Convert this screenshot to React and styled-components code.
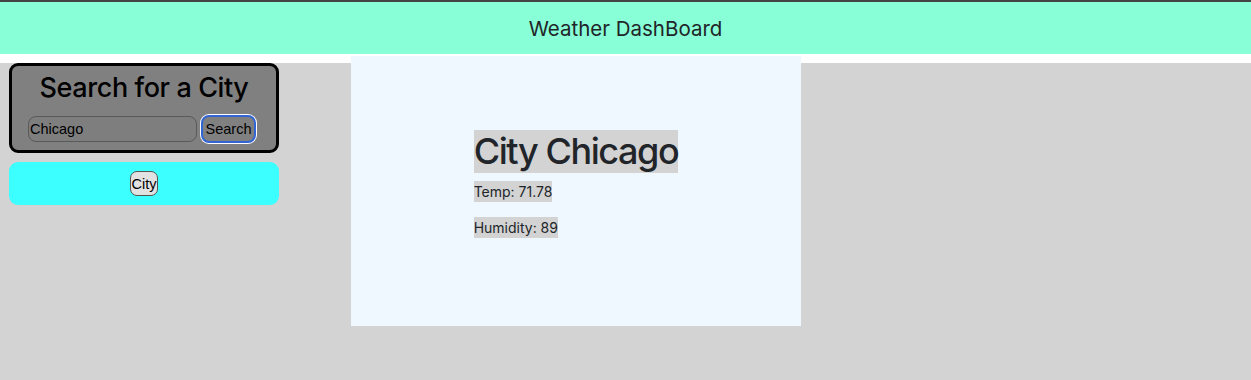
import React from 'react';
import styled, { createGlobalStyle } from 'styled-components';

const GlobalStyle = createGlobalStyle`
  html, body {
    margin: 0;
    padding: 0;
    background: #ffffff;
    font-family: Inter, "Noto Sans", sans-serif;
    color: #212529;
  }
`;

const Header = styled.header`
  display: flex;
  justify-content: center;
  align-items: center;
  height: 52px;
  border-top: 2px solid #444444;
  background-color: #88ffd6;
  font-size: 20.5px;
  color: #212529;
`;

const Main = styled.main`
  display: flex;
  align-items: flex-start;
  margin-top: 9px;
  min-height: calc(100vh - 63px);
  background-color: #d3d3d3;
`;

const Sidebar = styled.aside`
  display: flex;
  flex-direction: column;
  gap: 9px;
  width: 270px;
  padding: 0 72px 0 9px;
`;

const SearchBox = styled.section`
  display: flex;
  flex-direction: column;
  align-items: center;
  height: 90px;
  box-sizing: border-box;
  border: 3px solid #000000;
  border-radius: 9px;
  background-color: #808080;
`;

const SearchTitle = styled.h2`
  margin: 5px 0 0;
  font-size: 27px;
  font-weight: 500;
  letter-spacing: -0.4px;
  line-height: 34px;
  color: #000000;
`;

const SearchRow = styled.form`
  display: flex;
  align-items: center;
  gap: 4px;
  margin: 10px 4px 0 0;
`;

const CityInput = styled.input`
  width: 169px;
  height: 26px;
  box-sizing: border-box;
  padding: 0 1px;
  border: 1px solid #5a5a5a;
  border-radius: 8px;
  background-color: #7e7e7e;
  font-family: "Liberation Sans", Arial, sans-serif;
  font-size: 14.5px;
  color: #000000;
  outline: none;
`;

const SearchButton = styled.button`
  width: 55px;
  height: 28px;
  padding: 0;
  border: 2px solid #3165d4;
  border-radius: 8px;
  box-shadow: 0 0 0 1px #ffffff;
  background-color: #808080;
  font-family: "Liberation Sans", Arial, sans-serif;
  font-size: 14.5px;
  color: #000000;
`;

const HistoryBar = styled.div`
  display: flex;
  justify-content: center;
  align-items: center;
  height: 43px;
  border-radius: 9px;
  background-color: #3cffff;
`;

const HistoryButton = styled.button`
  height: 25px;
  padding: 0 1px;
  border: 1px solid #555555;
  border-radius: 7px;
  background-color: #e2e2e2;
  font-family: "Liberation Sans", Arial, sans-serif;
  font-size: 14.5px;
  color: #000000;
`;

const Card = styled.section`
  display: flex;
  justify-content: center;
  width: 450px;
  height: 270px;
  margin-top: -7px;
  box-sizing: border-box;
  padding-top: 74px;
  background-color: #f0f8ff;
`;

const Forecast = styled.div`
  display: flex;
  flex-direction: column;
  align-items: flex-start;
`;

const CityName = styled.h1`
  margin: 0 0 8px;
  font-size: 36px;
  font-weight: 500;
  letter-spacing: -1.4px;
  line-height: 43px;
  background-color: #d3d3d3;
`;

const Stat = styled.p`
  margin: 0 0 15px;
  font-size: 14px;
  line-height: 21px;
  background-color: #d3d3d3;
`;

export default function App() {
  return (
    <>
      <GlobalStyle />
      <Header>Weather DashBoard</Header>
      <Main>
        <Sidebar>
          <SearchBox>
            <SearchTitle>Search for a City</SearchTitle>
            <SearchRow onSubmit={(e) => e.preventDefault()}>
              <CityInput defaultValue="Chicago" />
              <SearchButton type="submit">Search</SearchButton>
            </SearchRow>
          </SearchBox>
          <HistoryBar>
            <HistoryButton>City</HistoryButton>
          </HistoryBar>
        </Sidebar>
        <Card>
          <Forecast>
            <CityName>City Chicago</CityName>
            <Stat>Temp: 71.78</Stat>
            <Stat>Humidity: 89</Stat>
          </Forecast>
        </Card>
      </Main>
    </>
  );
}
